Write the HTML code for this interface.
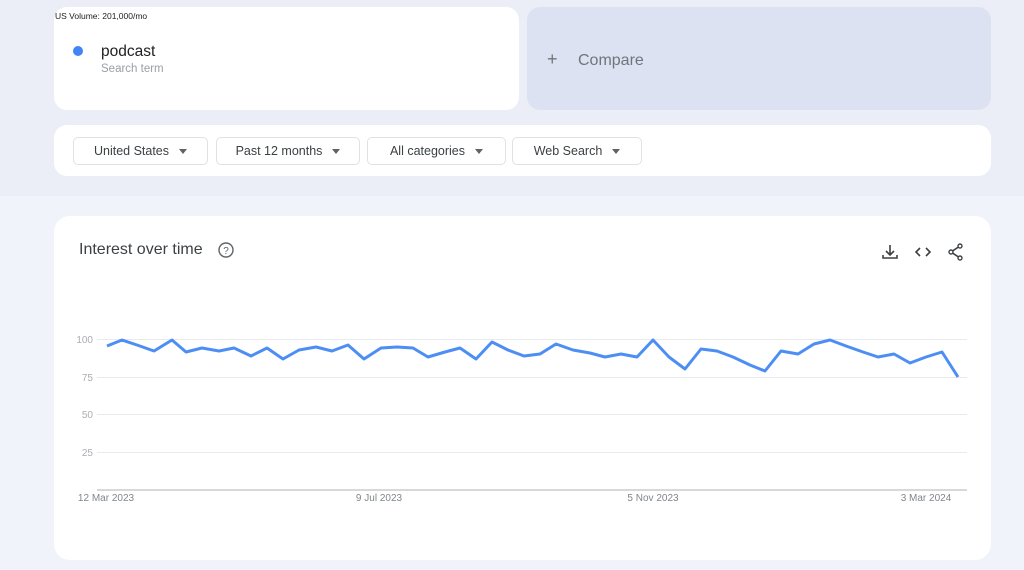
<!DOCTYPE html>
<html><head><meta charset="utf-8"><style>
*{margin:0;padding:0;box-sizing:border-box}
body{width:1024px;height:570px;overflow:hidden;font-family:"Liberation Sans",sans-serif;background:#f0f3f9;position:relative}
.top{position:absolute;left:0;top:0;width:1024px;height:196px;background:#ebeef7}
.card{position:absolute;background:#fff;border-radius:13px}
.sel{position:absolute;top:137px;height:28px;border:1px solid #dfe1e5;border-radius:5px;background:#fff;font-size:12.5px;color:#3c4043;display:flex;align-items:center;justify-content:center;gap:10px}
.tri{width:0;height:0;border-left:4.5px solid transparent;border-right:4.5px solid transparent;border-top:5px solid #5f6368}
</style></head><body>
<div class="top"></div>
<div class="card" style="left:54px;top:7px;width:465px;height:103px"></div>
<div style="position:absolute;left:55px;top:11px;font-size:8.5px;color:#222">US Volume: 201,000/mo</div>
<div style="position:absolute;left:73px;top:46px;width:10px;height:10px;border-radius:50%;background:#4285f4"></div>
<div style="position:absolute;left:101px;top:43px;font-size:15.5px;color:#202124">podcast</div>
<div style="position:absolute;left:101px;top:63px;font-size:11.5px;color:#9aa0a6">Search term</div>
<div style="position:absolute;left:527px;top:7px;width:464px;height:103px;background:#dde2f3;border-radius:13px"></div>
<div style="position:absolute;left:547px;top:49px;font-size:18px;color:#70757a">+</div>
<div style="position:absolute;left:578px;top:52px;font-size:16px;color:#70757a">Compare</div>
<div class="card" style="left:54px;top:125px;width:937px;height:51px"></div>
<div class="sel" style="left:73px;width:135px">United States<span class="tri"></span></div>
<div class="sel" style="left:216px;width:144px">Past 12 months<span class="tri"></span></div>
<div class="sel" style="left:367px;width:139px">All categories<span class="tri"></span></div>
<div class="sel" style="left:512px;width:130px">Web Search<span class="tri"></span></div>
<div class="card" style="left:54px;top:216px;width:937px;height:344px;border-radius:16px"></div>
<div style="position:absolute;left:79px;top:241px;font-size:16px;color:#3c4043">Interest over time</div>
<svg style="position:absolute;left:0;top:0" width="1024" height="570">
<circle cx="226" cy="250" r="7" fill="none" stroke="#5f6368" stroke-width="1.4"/>
<text x="226" y="254" font-size="10" text-anchor="middle" fill="#5f6368" font-family="Liberation Sans">?</text>
<g stroke="#3c4043" stroke-width="1.6" fill="none">
<path d="M890 245v10M886 251l4 4 4-4M883 255v3h14v-3"/>
<path d="M920 248l-4 4 4 4M926 248l4 4-4 4"/>
<path d="M960 246l-9 6 9 6"/>
</g>
<g fill="#fff" stroke="#3c4043" stroke-width="1.4"><circle cx="960" cy="246" r="2"/><circle cx="951" cy="252" r="2"/><circle cx="960" cy="258" r="2"/></g>
<g stroke="#e8eaed" stroke-width="1"><line x1="97" y1="339.5" x2="967" y2="339.5"/><line x1="97" y1="377.5" x2="967" y2="377.5"/><line x1="97" y1="414.5" x2="967" y2="414.5"/><line x1="97" y1="452.5" x2="967" y2="452.5"/></g>
<line x1="97" y1="490" x2="967" y2="490" stroke="#ccc" stroke-width="1.5"/>
<g font-size="10" fill="#aaaeb3" font-family="Liberation Sans" text-anchor="end">
<text x="93" y="343">100</text><text x="93" y="381">75</text><text x="93" y="418">50</text><text x="93" y="456">25</text></g>
<g font-size="10" fill="#80868b" font-family="Liberation Sans" text-anchor="middle">
<text x="106" y="501">12 Mar 2023</text><text x="379" y="501">9 Jul 2023</text><text x="653" y="501">5 Nov 2023</text><text x="926" y="501">3 Mar 2024</text></g>
<polyline fill="none" stroke="#4d8ef5" stroke-width="3" stroke-linejoin="round" points="107,346 122,340 137,345 154,351 172,340 186,352 202,348 219,351 234,348 251,356 267,348 283,359 299,350 316,347 332,351 348,345 364,359 381,348 397,347 413,348 428,357 445,352 460,348 476,359 492,342 508,350 524,356 540,354 556,344 573,350 590,353 605,357 621,354 637,357 653,340 669,357 685,369 701,349 717,351 733,357 750,365 765,371 781,351 798,354 814,344 830,340 846,346 863,352 878,357 894,354 910,363 926,357 942,352 958,377"/>
</svg>
</body></html>
